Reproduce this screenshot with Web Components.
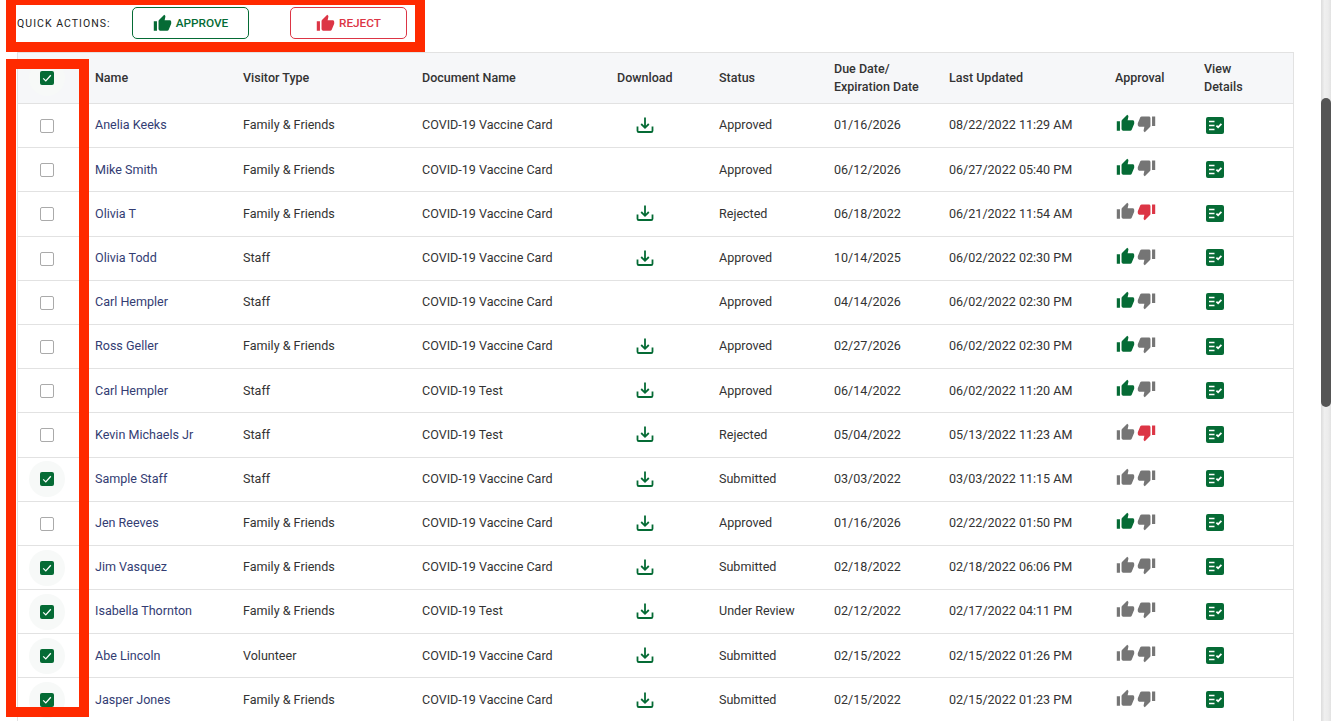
<!DOCTYPE html>
<html>
<head>
<meta charset="utf-8">
<title>Documents</title>
<style>
  html, body { margin: 0; height: 100%; overflow: hidden; background: #fff; }
  body { font-family: Roboto, "Liberation Sans", sans-serif; color: #2b2b2b; }
  .page { padding-left: 17px; padding-right: 46px; }
</style>
</head>
<body>
<div class="page">
  <quick-actions></quick-actions>
  <doc-table></doc-table>
</div>
<page-scroll></page-scroll>
<mark-box style="left:6px;top:-5px;width:399px;height:37px"></mark-box>
<mark-box style="left:6px;top:59px;width:63px;height:638px"></mark-box>

<script>
const THUMB_UP = `<path d="M1 21h4V9H1v12zm22-11c0-1.1-.9-2-2-2h-6.31l.95-4.57.03-.32c0-.41-.17-.79-.44-1.06L14.17 1 7.59 7.59C7.22 7.95 7 8.45 7 9v10c0 1.1.9 2 2 2h9c.83 0 1.54-.5 1.84-1.22l3.02-7.05c.09-.23.14-.47.14-.73v-2z"/>`
const THUMB_DOWN = `<path d="M15 3H6c-.83 0-1.54.5-1.84 1.22l-3.02 7.05c-.09.23-.14.47-.14.73v2c0 1.1.9 2 2 2h6.31l-.95 4.57-.03.32c0 .41.17.79.44 1.06L9.83 23l6.59-6.59c.36-.36.58-.86.58-1.41V5c0-1.1-.9-2-2-2zm4 0v12h4V3h-4z"/>`

class MarkBox extends HTMLElement {
  constructor() {
    super()
    this.attachShadow({ mode: "open" })
    this.shadowRoot.innerHTML = `<style>
      :host { display: block; position: absolute; border: 10px solid #ff2a00; pointer-events: none; }
    </style>`
  }
}
customElements.define("mark-box", MarkBox)

class PageScroll extends HTMLElement {
  constructor() {
    super()
    this.attachShadow({ mode: "open" })
    this.shadowRoot.innerHTML = `<style>
      :host { display: block; position: absolute; left: 1321px; top: 0; width: 10px; height: 721px;
        background: linear-gradient(to right, #dcdcdc, #efefef 35%, #ececec 70%, #e2e2e2); }
      .thumb { margin-top: 98px; height: 309px; background: #555; border-radius: 5px; }
    </style><div class="thumb"></div>`
  }
}
customElements.define("page-scroll", PageScroll)

class ActionButton extends HTMLElement {
  constructor() {
    super()
    this.attachShadow({ mode: "open" })
    this.shadowRoot.innerHTML = `<style>
      :host { display: flex; align-items: center; justify-content: center; gap: 4px; box-sizing: border-box; width: 117px; height: 32px;
        border: 1px solid currentColor; border-radius: 5px; font-size: 11.8px; font-weight: 500; }
      svg { width: 19px; height: 19px; fill: currentColor; }
    </style>
    <svg viewBox="0 0 24 24">${THUMB_UP}</svg><slot></slot>`
  }
}
customElements.define("action-button", ActionButton)

class QuickActions extends HTMLElement {
  constructor() {
    super()
    this.attachShadow({ mode: "open" })
    this.shadowRoot.innerHTML = `<style>
      :host { display: flex; align-items: center; height: 46px; padding-bottom: 6px; box-sizing: content-box; }
      .label { width: 115px; font-size: 10.5px; letter-spacing: 1.05px; color: #222; }
      .reject { margin-left: 41px; color: #dc3545; }
      .approve { color: #056b35; }
    </style>
    <div class="label">QUICK ACTIONS:</div>
    <action-button class="approve">APPROVE</action-button>
    <action-button class="reject">REJECT</action-button>`
  }
}
customElements.define("quick-actions", QuickActions)

class RowCheck extends HTMLElement {
  connectedCallback() {
    if (this.shadowRoot) return
    this.attachShadow({ mode: "open" })
    const on = this.hasAttribute("checked")
    this.shadowRoot.innerHTML = `<style>
      :host { display: flex; align-items: center; justify-content: center; width: 36px; height: 36px; border-radius: 50%; }
      :host([checked]) { background: #f7f9f8; }
      .box { box-sizing: border-box; width: 14px; height: 14px; border: 1px solid #aaa; border-radius: 2px; background: #fff; }
      :host([checked]) .box { border: 0; background: #056b35; }
      svg { display: block; width: 14px; height: 14px; fill: none; stroke: #fff; stroke-width: 1.3; }
    </style>
    <div class="box">${on ? '<svg viewBox="0 0 14 14"><path d="M3.2 7.4l2.6 2.5 5-5.6"/></svg>' : ''}</div>`
  }
}
customElements.define("row-check", RowCheck)

class ApprovalThumbs extends HTMLElement {
  connectedCallback() {
    if (this.shadowRoot) return
    this.attachShadow({ mode: "open" })
    const state = this.getAttribute("state")
    const up = state == "Approved" ? "#056b35" : "#757575"
    const down = state == "Rejected" ? "#dc3545" : "#757575"
    this.shadowRoot.innerHTML = `<style>
      :host { display: flex; gap: 2px; align-items: center; margin-top: -3px; margin-left: 1px; }
      svg { display: block; width: 19px; height: 19px; }
    </style>
    <svg viewBox="0 0 24 24" fill="${up}">${THUMB_UP}</svg>
    <svg viewBox="0 0 24 24" fill="${down}">${THUMB_DOWN}</svg>`
  }
}
customElements.define("approval-thumbs", ApprovalThumbs)

class DownloadIcon extends HTMLElement {
  constructor() {
    super()
    this.attachShadow({ mode: "open" })
    this.shadowRoot.innerHTML = `<style>
      :host { display: block; width: 18px; height: 18px; margin-left: 19px; }
      svg { display: block; width: 18px; height: 18px; fill: none; stroke: #056b35; stroke-width: 1.8; }
    </style>
    <svg viewBox="0 0 18 18"><path d="M9 1.5v10M5.2 8l3.8 3.8L12.8 8M1.5 10.5v4.2a1.3 1.3 0 0 0 1.3 1.3h12.4a1.3 1.3 0 0 0 1.3-1.3v-4.2"/></svg>`
  }
}
customElements.define("download-icon", DownloadIcon)

class DetailsIcon extends HTMLElement {
  constructor() {
    super()
    this.attachShadow({ mode: "open" })
    this.shadowRoot.innerHTML = `<style>
      :host { display: block; width: 18px; height: 17px; margin-left: 2px; }
      svg { display: block; width: 18px; height: 17px; }
    </style>
    <svg viewBox="0 0 18 17"><rect width="18" height="17" rx="2" fill="#056b35"/>
      <path d="M3 4.5h5.5M3 8.5h5.5M3 12.5h5.5" stroke="#fff" stroke-width="1.5" fill="none"/>
      <path d="M10.4 8.6l1.7 1.7 3.3-3.5" stroke="#fff" stroke-width="1.8" fill="none"/></svg>`
  }
}
customElements.define("details-icon", DetailsIcon)

const COLUMNS = "77px 148px 179px 195px 102px 115px 115px 166px 89px 1fr"

class DocRow extends HTMLElement {
  connectedCallback() {
    if (this.shadowRoot) return
    this.attachShadow({ mode: "open" })
    const d = JSON.parse(this.getAttribute("data"))
    this.shadowRoot.innerHTML = `<style>
      :host { display: grid; grid-template-columns: ${COLUMNS}; align-items: center; height: 44.2px; box-sizing: border-box;
        border-bottom: 1px solid #e2e2e2; font-size: 12.55px; color: #333; padding-bottom: 1px; }
      .check { display: flex; justify-content: center; padding: 1.7px 19px 0 0; }
      .name { color: #333d73; }
      .t { padding-bottom: .35px; }
    </style>
    <div class="check"><row-check ${d[7] ? "checked" : ""}></row-check></div>
    <div class="t name">${d[0]}</div>
    <div class="t">${d[1]}</div>
    <div class="t">${d[2]}</div>
    <div>${d[3] ? "<download-icon></download-icon>" : ""}</div>
    <div class="t">${d[4]}</div>
    <div class="t">${d[5]}</div>
    <div class="t">${d[6]}</div>
    <div><approval-thumbs state="${d[4]}"></approval-thumbs></div>
    <div><details-icon></details-icon></div>`
  }
}
customElements.define("doc-row", DocRow)

const VAX = "COVID-19 Vaccine Card", TEST = "COVID-19 Test", FF = "Family &amp; Friends"
const ROWS = [
  ["Anelia Keeks", FF, VAX, 1, "Approved", "01/16/2026", "08/22/2022 11:29 AM", 0],
  ["Mike Smith", FF, VAX, 0, "Approved", "06/12/2026", "06/27/2022 05:40 PM", 0],
  ["Olivia T", FF, VAX, 1, "Rejected", "06/18/2022", "06/21/2022 11:54 AM", 0],
  ["Olivia Todd", "Staff", VAX, 1, "Approved", "10/14/2025", "06/02/2022 02:30 PM", 0],
  ["Carl Hempler", "Staff", VAX, 0, "Approved", "04/14/2026", "06/02/2022 02:30 PM", 0],
  ["Ross Geller", FF, VAX, 1, "Approved", "02/27/2026", "06/02/2022 02:30 PM", 0],
  ["Carl Hempler", "Staff", TEST, 1, "Approved", "06/14/2022", "06/02/2022 11:20 AM", 0],
  ["Kevin Michaels Jr", "Staff", TEST, 1, "Rejected", "05/04/2022", "05/13/2022 11:23 AM", 0],
  ["Sample Staff", "Staff", VAX, 1, "Submitted", "03/03/2022", "03/03/2022 11:15 AM", 1],
  ["Jen Reeves", FF, VAX, 1, "Approved", "01/16/2026", "02/22/2022 01:50 PM", 0],
  ["Jim Vasquez", FF, VAX, 1, "Submitted", "02/18/2022", "02/18/2022 06:06 PM", 1],
  ["Isabella Thornton", FF, TEST, 1, "Under Review", "02/12/2022", "02/17/2022 04:11 PM", 1],
  ["Abe Lincoln", "Volunteer", VAX, 1, "Submitted", "02/15/2022", "02/15/2022 01:26 PM", 1],
  ["Jasper Jones", FF, VAX, 1, "Submitted", "02/15/2022", "02/15/2022 01:23 PM", 1]
]

class DocTable extends HTMLElement {
  constructor() {
    super()
    this.attachShadow({ mode: "open" })
    this.shadowRoot.innerHTML = `<style>
      :host { display: block; border-left: 1px solid #e2e2e2; border-right: 1px solid #e2e2e2; width: 1277px; box-sizing: border-box; }
      .head { display: grid; grid-template-columns: ${COLUMNS}; align-items: center; height: 52px; box-sizing: border-box;
        background: #f6f7f9; border-top: 1px solid #e2e2e2; border-bottom: 1px solid #e2e2e2;
        font-size: 12.5px; font-weight: 500; line-height: 18px; color: #333; }
      .check { display: flex; justify-content: center; padding-right: 19px; }
    </style>
    <div class="head">
      <div class="check"><row-check checked></row-check></div>
      <div>Name</div><div>Visitor Type</div><div>Document Name</div><div>Download</div><div>Status</div>
      <div>Due Date/<br>Expiration Date</div><div>Last Updated</div><div>Approval</div><div>View<br>Details</div>
    </div>
    <div class="rows"></div>`
    const rows = this.shadowRoot.querySelector(".rows")
    ROWS.forEach(r => {
      const row = document.createElement("doc-row")
      row.setAttribute("data", JSON.stringify(r))
      rows.appendChild(row)
    })
  }
}
customElements.define("doc-table", DocTable)
</script>
</body>
</html>
